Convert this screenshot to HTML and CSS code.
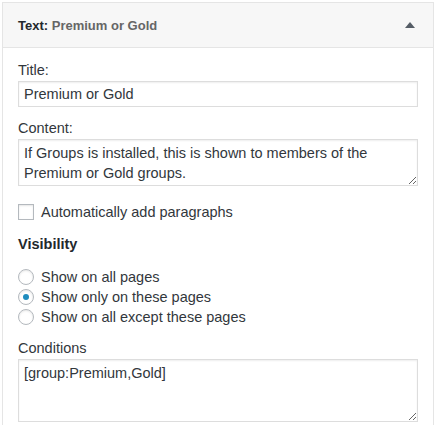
FILE: index.html
```html
<!DOCTYPE html>
<html>
<head>
<meta charset="utf-8">
<link rel="stylesheet" href="styles.css">
</head>
<body>
<div class="widget">
  <div class="widget-top">
    <h3 class="widget-title">Text:<span class="in-title"> Premium or Gold</span></h3>
    <span class="toggle"></span>
  </div>
  <div class="widget-inside">
    <p class="field">
      <label class="lbl">Title:</label>
      <input class="text-input" type="text" value="Premium or Gold">
    </p>
    <p class="field">
      <label class="lbl">Content:</label>
      <textarea class="area content-area">If Groups is installed, this is shown to members of the Premium or Gold groups.</textarea>
    </p>
    <p class="check-row">
      <span class="checkbox"></span>
      <span class="check-label">Automatically add paragraphs</span>
    </p>
    <p class="section-title">Visibility</p>
    <ul class="radios">
      <li class="radio-row"><span class="radio"></span><span>Show on all pages</span></li>
      <li class="radio-row"><span class="radio checked"></span><span>Show only on these pages</span></li>
      <li class="radio-row"><span class="radio"></span><span>Show on all except these pages</span></li>
    </ul>
    <p class="field">
      <label class="lbl">Conditions</label>
      <textarea class="area cond-area">[group:Premium,Gold]</textarea>
    </p>
  </div>
</div>
</body>
</html>
```

FILE: styles.css
```css
* { box-sizing: border-box; }
html, body { margin: 0; padding: 0; background: #fff; }
body {
  padding: 2px 2px 0 2px;
  font-family: "Liberation Sans", Arial, sans-serif;
  font-size: 14.5px;
  color: #32373c;
}
.widget {
  width: 432px;
  border: 1px solid #e5e5e5;
  background: #fff;
}
.widget-top {
  height: 45px;
  background: #f7f7f7;
  border-bottom: 1px solid #e5e5e5;
  display: flex;
  align-items: center;
  justify-content: space-between;
  padding: 0 15px 0 15px;
}
.widget-title {
  margin: 0;
  font-size: 13px;
  font-weight: bold;
  color: #23282d;
  line-height: 1;
}
.in-title { color: #666; }
.toggle {
  width: 0; height: 0;
  border-left: 5px solid transparent;
  border-right: 5px solid transparent;
  border-bottom: 6px solid #555d66;
  margin-right: 3px;
}
.widget-inside {
  padding: 13px 15px 0 15px;
}
.field { margin: 0 0 12px 0; }
.lbl {
  display: block;
  line-height: 18px;
  margin-bottom: 2px;
  color: #32373c;
}
.text-input, .area {
  display: block;
  width: 400px;
  border: 1px solid #ddd;
  box-shadow: inset 0 1px 2px rgba(0,0,0,0.07);
  font-family: "Liberation Sans", Arial, sans-serif;
  font-size: 14.5px;
  color: #32373c;
  margin: 0;
  outline: none;
}
.text-input {
  height: 26px;
  padding: 2px 5px;
}
.area {
  padding: 3px 5px;
  line-height: 20px;
  resize: vertical;
}
.content-area { height: 47px; }
.cond-area { height: 63px; }
.check-row {
  margin: 18px 0 0 0;
  display: flex;
  align-items: center;
  height: 16px;
}
.checkbox {
  width: 16px; height: 16px;
  border: 1px solid #b4b9be;
  box-shadow: inset 0 1px 2px rgba(0,0,0,0.1);
  margin-right: 7px;
  flex: none;
}
.section-title {
  margin: 15px 0 0 0;
  font-weight: bold;
  color: #23282d;
  line-height: 18px;
}
.radios {
  list-style: none;
  margin: 14px 0 12px 0;
  padding: 0;
}
.radio-row {
  display: flex;
  align-items: center;
  height: 20px;
}
.radio {
  width: 16px; height: 16px;
  border: 1px solid #b4b9be;
  border-radius: 50%;
  box-shadow: inset 0 1px 2px rgba(0,0,0,0.1);
  margin-right: 7px;
  flex: none;
  display: flex;
  align-items: center;
  justify-content: center;
}
.radio.checked::after {
  content: "";
  width: 6px; height: 6px;
  border-radius: 50%;
  background: #1e8cbe;
}
```
